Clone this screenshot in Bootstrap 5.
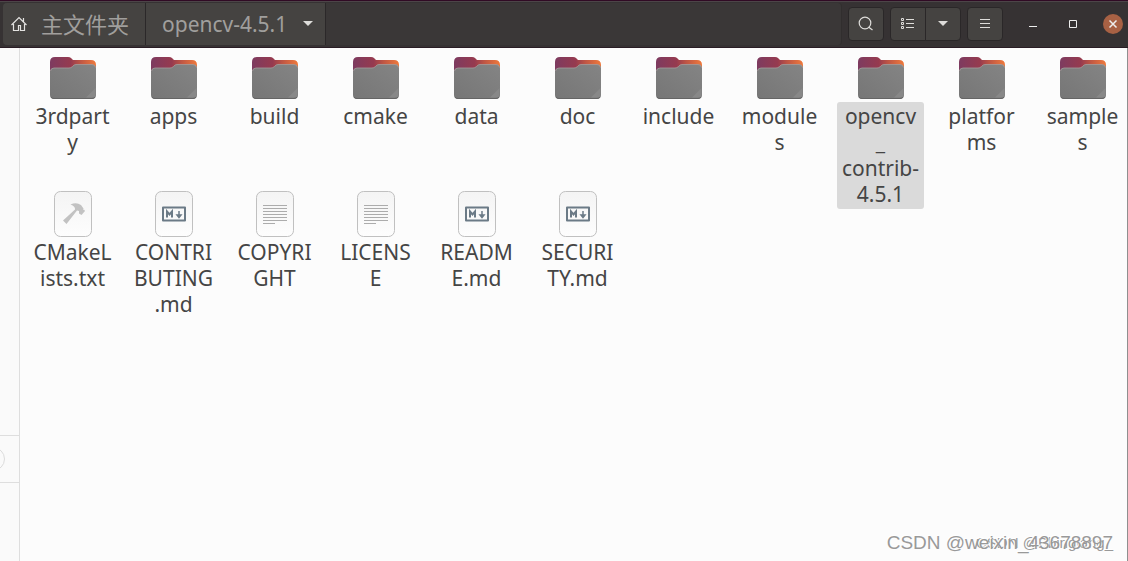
<!DOCTYPE html>
<html lang="zh-CN">
<head>
<meta charset="utf-8">
<meta name="viewport" content="width=device-width, initial-scale=1">
<title>opencv-4.5.1</title>
<link href="https://cdn.jsdelivr.net/npm/bootstrap@5.3.0/dist/css/bootstrap.min.css" rel="stylesheet">
<style>
body{font-family:"Noto Sans","Noto Sans CJK SC",sans-serif;font-size:21px;line-height:26px;color:#454545;background:#fcfcfc}
.topbar{height:48px;background:#363233;border-top:1px solid #300a24;border-bottom:1px solid #2a1d25;box-shadow:inset 0 1px #4c4548;padding:0 5px 0 3px}
.crumbs{margin-right:6px;background:#3a3737;border-radius:4px;border-right:1px solid #312e2e}
.crumb{height:42px;border:0;border-right:1px solid #2b2829;background:#454341;color:#a09f9d;padding:0 12px 0 16px}
.crumb:first-child{gap:13px;padding:0 16px 0 7px;border-radius:4px 0 0 4px;font-size:22px}
.tools{gap:6px}
.tool{width:36px;height:34px;padding:0;border:1px solid #2a2728;background:#454341;color:#deddda;border-radius:4px;display:flex;align-items:center;justify-content:center}
.tool.first{border-radius:4px 0 0 4px}
.tool.last{border-radius:0 4px 4px 0;margin-left:-1px}
.wins{gap:20px;margin-left:20px}
.win{width:20px;height:20px;padding:0;border:0;background:none;color:#eee;border-radius:50%;display:flex}
.win-close{background:#a86144}
.side{width:20px;background:#fafafa;border-right:1px solid #dedede}
.side-row{height:48px;margin-top:387px;border-top:1px solid #dedede;border-bottom:1px solid #dedede}
.disc{width:24px;height:24px;margin-left:-19px;border:1px solid #dcdcdc;border-radius:50%}
.files{display:grid;grid-template-columns:repeat(auto-fill,87px);grid-auto-rows:136px;column-gap:14px;align-content:start;padding:6px 0 0 9px;border-right:1px solid #8f8f8f}
.file{color:#454545;text-decoration:none;text-align:center}
.file:hover{color:#454545}
.file svg{display:block;margin:0 auto}
.file span{display:block;padding:1px 0 2px;border-radius:3px;white-space:nowrap}
.chosen span{background:#dadada}
.marks{right:15px;bottom:5px;font-family:"Liberation Sans",sans-serif;color:#999;text-shadow:-1px -1px #fff;display:grid;align-items:center;pointer-events:none}
.marks div{grid-area:1/1;text-align:right;white-space:nowrap}
.mark-a{font-size:19px}
.mark-b{font-size:15px}
</style>
</head>
<body class="min-vh-100 d-flex flex-column overflow-hidden position-relative">
<svg width="0" height="0" class="position-absolute" aria-hidden="true">
<defs>
<linearGradient id="gb" x1="0" x2="1"><stop stop-color="#7d3b60"/><stop offset=".45" stop-color="#963a4f"/><stop offset=".65" stop-color="#bd5545"/><stop offset="1" stop-color="#ef7a3c"/></linearGradient>
<linearGradient id="gf" x1="0" y1="1" x2="1" y2="0"><stop stop-color="#767676"/><stop offset="1" stop-color="#848484"/></linearGradient>
<linearGradient id="gp" x1="0" y1="0" x2="0" y2="1"><stop stop-color="#f4f4f4"/><stop offset="1" stop-color="#fdfdfd"/></linearGradient>
<symbol id="folder" viewBox="0 0 48 48"><path d="M1 8q0-5 5-5h13q2 0 3 1l2 2h18q5 0 5 5v14H1z" fill="url(#gb)"/><path d="M1 18q0-4 4-4h15q2 0 3.500-1.500l.5-.5q1-1.500 3-1.500h16q4 0 4 4V41q0 4-4 4H5q-4 0-4-4z" fill="url(#gf)"/><path d="M1.500 17q.5-3 3.500-3h15q2 0 3.500-1.500l.5-.5q1-1.500 3-1.500h16q3 0 3.500 3" fill="none" stroke="#a59c9c" stroke-width=".8"/><path d="M37 43.500L46.500 34v7q0 2.500-3 2.500z" fill="#888"/><path d="M2 43q1 1.500 3 1.500h38q2 0 3-1.500" fill="none" stroke="#656565"/></symbol>
<symbol id="page" viewBox="0 0 48 48"><rect x="5.500" y="1.500" width="37" height="45" rx="6" fill="url(#gp)" stroke="#c0c0c0"/></symbol>
<symbol id="md" viewBox="0 0 48 48"><use href="#page"/><path d="M13 17.500h22v13H13z" fill="none" stroke="#6b7a86" stroke-width="2" stroke-linejoin="round"/><path d="M17 27.500v-6l2.500 3 2.500-3v6" fill="none" stroke="#6b7a86" stroke-width="2"/><path d="M29 21v5M27 25h4l-2 2.500z" fill="#6b7a86" stroke="#6b7a86" stroke-width="1.500"/></symbol>
<symbol id="text" viewBox="0 0 48 48"><use href="#page"/><path d="M12 15.500h24M12 18.500h24M12 21.500h24M12 24.500h24M12 27.500h24M12 30.500h24M12 33.500h12" stroke="#acacac"/></symbol>
<symbol id="hammer" viewBox="0 0 48 48"><use href="#page"/><path d="M21.500 14.500q6-2.500 10.500.5l2.500 3.500-.5 1.500 1-.5 1 1.500-3.500 4-2.500-1.500v-2.500l-2-.5L17.500 34 14 30.500 26 19.500q.5-3-4.500-5z" fill="#c2c2c2"/></symbol>
</defs>
</svg>
<header class="topbar d-flex align-items-center flex-shrink-0">
<nav class="crumbs d-flex flex-grow-1" aria-label="路径">
<button class="crumb d-flex align-items-center"><svg width="18" height="18" viewBox="0 0 18 18" fill="none" stroke="#e4e3e1" stroke-width="1.200"><path d="M1.500 10L9 2.500l7.500 7.500M13.500 3v4M3.500 9v6.500h5v-5h2v5h4V9"/></svg><span>主文件夹</span></button>
<button class="crumb d-flex align-items-center"><span>opencv-4.5.1</span><svg class="ms-3" width="10" height="6" viewBox="0 0 10 6"><path d="M0 0h10L5 5z" fill="#deddda"/></svg></button>
</nav>
<div class="tools d-flex">
<button class="tool" aria-label="搜索"><svg width="16" height="16" viewBox="0 0 16 16" fill="none" stroke="currentColor" stroke-width="1.200"><circle cx="7" cy="7" r="5.800"/><path d="M10.500 11l4 3"/></svg></button>
<div class="d-flex">
<button class="tool first" aria-label="列表视图"><svg width="14" height="12" viewBox="0 0 14 12" fill="none" stroke="currentColor"><path d="M.5.5h2v2h-2zM.5 4.500h2v2h-2zM.5 8.500h2v2h-2zM5 1.500h8M5 5.500h8M5 9.500h8"/></svg></button>
<button class="tool last" aria-label="视图选项"><svg width="10" height="6" viewBox="0 0 10 6"><path d="M0 0h10L5 5z" fill="currentColor"/></svg></button>
</div>
<button class="tool" aria-label="菜单"><svg width="12" height="10" viewBox="0 0 12 10" stroke="currentColor"><path d="M1 .5h10M1 4.500h10M1 8.500h10"/></svg></button>
</div>
<div class="wins d-flex">
<button class="win" aria-label="最小化"><svg width="20" height="20" stroke="currentColor"><path d="M6 12.500h8"/></svg></button>
<button class="win" aria-label="最大化"><svg width="20" height="20" fill="none" stroke="currentColor"><path d="M6.500 6.500h7v7h-7z"/></svg></button>
<button class="win win-close" aria-label="关闭"><svg width="20" height="20" stroke="currentColor" stroke-width="1.500"><path d="M6.500 6.500l7 7M13.500 6.500l-7 7"/></svg></button>
</div>
</header>
<main class="d-flex flex-grow-1">
<aside class="side flex-shrink-0 overflow-hidden"><div class="side-row d-flex align-items-center"><div class="disc flex-shrink-0"></div></div></aside>
<section class="files flex-grow-1">
<a class="file" href="#"><svg width="48" height="48"><use href="#folder"/></svg><span>3rdpart<br>y</span></a>
<a class="file" href="#"><svg width="48" height="48"><use href="#folder"/></svg><span>apps</span></a>
<a class="file" href="#"><svg width="48" height="48"><use href="#folder"/></svg><span>build</span></a>
<a class="file" href="#"><svg width="48" height="48"><use href="#folder"/></svg><span>cmake</span></a>
<a class="file" href="#"><svg width="48" height="48"><use href="#folder"/></svg><span>data</span></a>
<a class="file" href="#"><svg width="48" height="48"><use href="#folder"/></svg><span>doc</span></a>
<a class="file" href="#"><svg width="48" height="48"><use href="#folder"/></svg><span>include</span></a>
<a class="file" href="#"><svg width="48" height="48"><use href="#folder"/></svg><span>module<br>s</span></a>
<a class="file chosen" href="#"><svg width="48" height="48"><use href="#folder"/></svg><span>opencv<br>_<br>contrib-<br>4.5.1</span></a>
<a class="file" href="#"><svg width="48" height="48"><use href="#folder"/></svg><span>platfor<br>ms</span></a>
<a class="file" href="#"><svg width="48" height="48"><use href="#folder"/></svg><span>sample<br>s</span></a>
<a class="file" href="#"><svg width="48" height="48"><use href="#hammer"/></svg><span>CMakeL<br>ists.txt</span></a>
<a class="file" href="#"><svg width="48" height="48"><use href="#md"/></svg><span>CONTRI<br>BUTING<br>.md</span></a>
<a class="file" href="#"><svg width="48" height="48"><use href="#text"/></svg><span>COPYRI<br>GHT</span></a>
<a class="file" href="#"><svg width="48" height="48"><use href="#text"/></svg><span>LICENS<br>E</span></a>
<a class="file" href="#"><svg width="48" height="48"><use href="#md"/></svg><span>READM<br>E.md</span></a>
<a class="file" href="#"><svg width="48" height="48"><use href="#md"/></svg><span>SECURI<br>TY.md</span></a>
</section>
</main>
<div class="marks position-absolute"><div class="mark-b">CSDN @Bbinglang_</div><div class="mark-a">CSDN @weixin_43678897</div></div>
</body>
</html>
